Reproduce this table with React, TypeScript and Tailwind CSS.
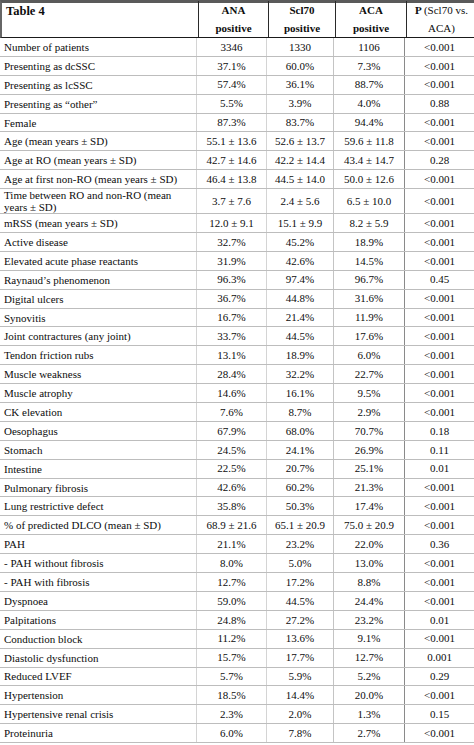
const rows: [string, string, string, string, string][] = [
  ['Number of patients', '3346', '1330', '1106', '<0.001'],
  ['Presenting as dcSSC', '37.1%', '60.0%', '7.3%', '<0.001'],
  ['Presenting as lcSSC', '57.4%', '36.1%', '88.7%', '<0.001'],
  ['Presenting as \u201cother\u201d', '5.5%', '3.9%', '4.0%', '0.88'],
  ['Female', '87.3%', '83.7%', '94.4%', '<0.001'],
  ['Age (mean years ± SD)', '55.1 ± 13.6', '52.6 ± 13.7', '59.6 ± 11.8', '<0.001'],
  ['Age at RO (mean years ± SD)', '42.7 ± 14.6', '42.2 ± 14.4', '43.4 ± 14.7', '0.28'],
  ['Age at first non-RO (mean years ± SD)', '46.4 ± 13.8', '44.5 ± 14.0', '50.0 ± 12.6', '<0.001'],
  ['Time between RO and non-RO (mean|years ± SD)', '3.7 ± 7.6', '2.4 ± 5.6', '6.5 ± 10.0', '<0.001'],
  ['mRSS (mean years ± SD)', '12.0 ± 9.1', '15.1 ± 9.9', '8.2 ± 5.9', '<0.001'],
  ['Active disease', '32.7%', '45.2%', '18.9%', '<0.001'],
  ['Elevated acute phase reactants', '31.9%', '42.6%', '14.5%', '<0.001'],
  ['Raynaud\u2019s phenomenon', '96.3%', '97.4%', '96.7%', '0.45'],
  ['Digital ulcers', '36.7%', '44.8%', '31.6%', '<0.001'],
  ['Synovitis', '16.7%', '21.4%', '11.9%', '<0.001'],
  ['Joint contractures (any joint)', '33.7%', '44.5%', '17.6%', '<0.001'],
  ['Tendon friction rubs', '13.1%', '18.9%', '6.0%', '<0.001'],
  ['Muscle weakness', '28.4%', '32.2%', '22.7%', '<0.001'],
  ['Muscle atrophy', '14.6%', '16.1%', '9.5%', '<0.001'],
  ['CK elevation', '7.6%', '8.7%', '2.9%', '<0.001'],
  ['Oesophagus', '67.9%', '68.0%', '70.7%', '0.18'],
  ['Stomach', '24.5%', '24.1%', '26.9%', '0.11'],
  ['Intestine', '22.5%', '20.7%', '25.1%', '0.01'],
  ['Pulmonary fibrosis', '42.6%', '60.2%', '21.3%', '<0.001'],
  ['Lung restrictive defect', '35.8%', '50.3%', '17.4%', '<0.001'],
  ['% of predicted DLCO (mean ± SD)', '68.9 ± 21.6', '65.1 ± 20.9', '75.0 ± 20.9', '<0.001'],
  ['PAH', '21.1%', '23.2%', '22.0%', '0.36'],
  ['- PAH without fibrosis', '8.0%', '5.0%', '13.0%', '<0.001'],
  ['- PAH with fibrosis', '12.7%', '17.2%', '8.8%', '<0.001'],
  ['Dyspnoea', '59.0%', '44.5%', '24.4%', '<0.001'],
  ['Palpitations', '24.8%', '27.2%', '23.2%', '0.01'],
  ['Conduction block', '11.2%', '13.6%', '9.1%', '<0.001'],
  ['Diastolic dysfunction', '15.7%', '17.7%', '12.7%', '0.001'],
  ['Reduced LVEF', '5.7%', '5.9%', '5.2%', '0.29'],
  ['Hypertension', '18.5%', '14.4%', '20.0%', '<0.001'],
  ['Hypertensive renal crisis', '2.3%', '2.0%', '1.3%', '0.15'],
  ['Proteinuria', '6.0%', '7.8%', '2.7%', '<0.001'],
];

const cols = 'grid grid-cols-[196px_70px_67px_71px_70px]';

function Head({ top, bottom }: { top: React.ReactNode; bottom: React.ReactNode }) {
  return (
    <div className="flex flex-col items-center -mt-[2px] border-l border-[#2a2a2a]">
      <div className="h-[18px] leading-[18px]">{top}</div>
      <div className="h-[18px] leading-[18px]">{bottom}</div>
    </div>
  );
}

export default function App() {
  return (
    <div className="w-[474px] bg-white text-[#0d0d0d] text-[11px]" style={{ fontFamily: '"Liberation Serif", "Times New Roman", serif' }}>
      <div className={`${cols} h-[38px] border-t-[3px] border-t-[#5a5a5a] border-b-[1.5px] border-b-[#1a1a1a] border-l-2 border-l-[#666] font-bold`}>
        <div className="-mt-[2px] pl-[4px] text-[12.5px] leading-[20px]">Table 4</div>
        <Head top="ANA" bottom="positive" />
        <Head top="Scl70" bottom="positive" />
        <Head top="ACA" bottom="positive" />
        <Head
          top={<>P <span className="font-normal">(Scl70 vs.</span></>}
          bottom={<span className="font-normal">ACA)</span>}
        />
      </div>
      <div>
        {rows.map(([label, a, b, c, p], i) => {
          const double = label.includes('|');
          return (
            <div key={i} className={`${cols} ${double ? 'h-[25px]' : 'h-[18.9px]'} border-b border-[#bdbdbd]`}>
              <div className="flex flex-col justify-center pl-[4px] leading-[12px] whitespace-nowrap">
                {label.split('|').map((l, j) => (
                  <span key={j}>{l}</span>
                ))}
              </div>
              <div className="flex items-center justify-center border-l border-[#d4d4d4]">{a}</div>
              <div className="flex items-center justify-center border-l border-[#d4d4d4]">{b}</div>
              <div className="flex items-center justify-center border-l border-[#c4c4c4]">{c}</div>
              <div className="flex items-center justify-center border-l border-[#8a8a8a]">{p}</div>
            </div>
          );
        })}
      </div>
    </div>
  );
}
